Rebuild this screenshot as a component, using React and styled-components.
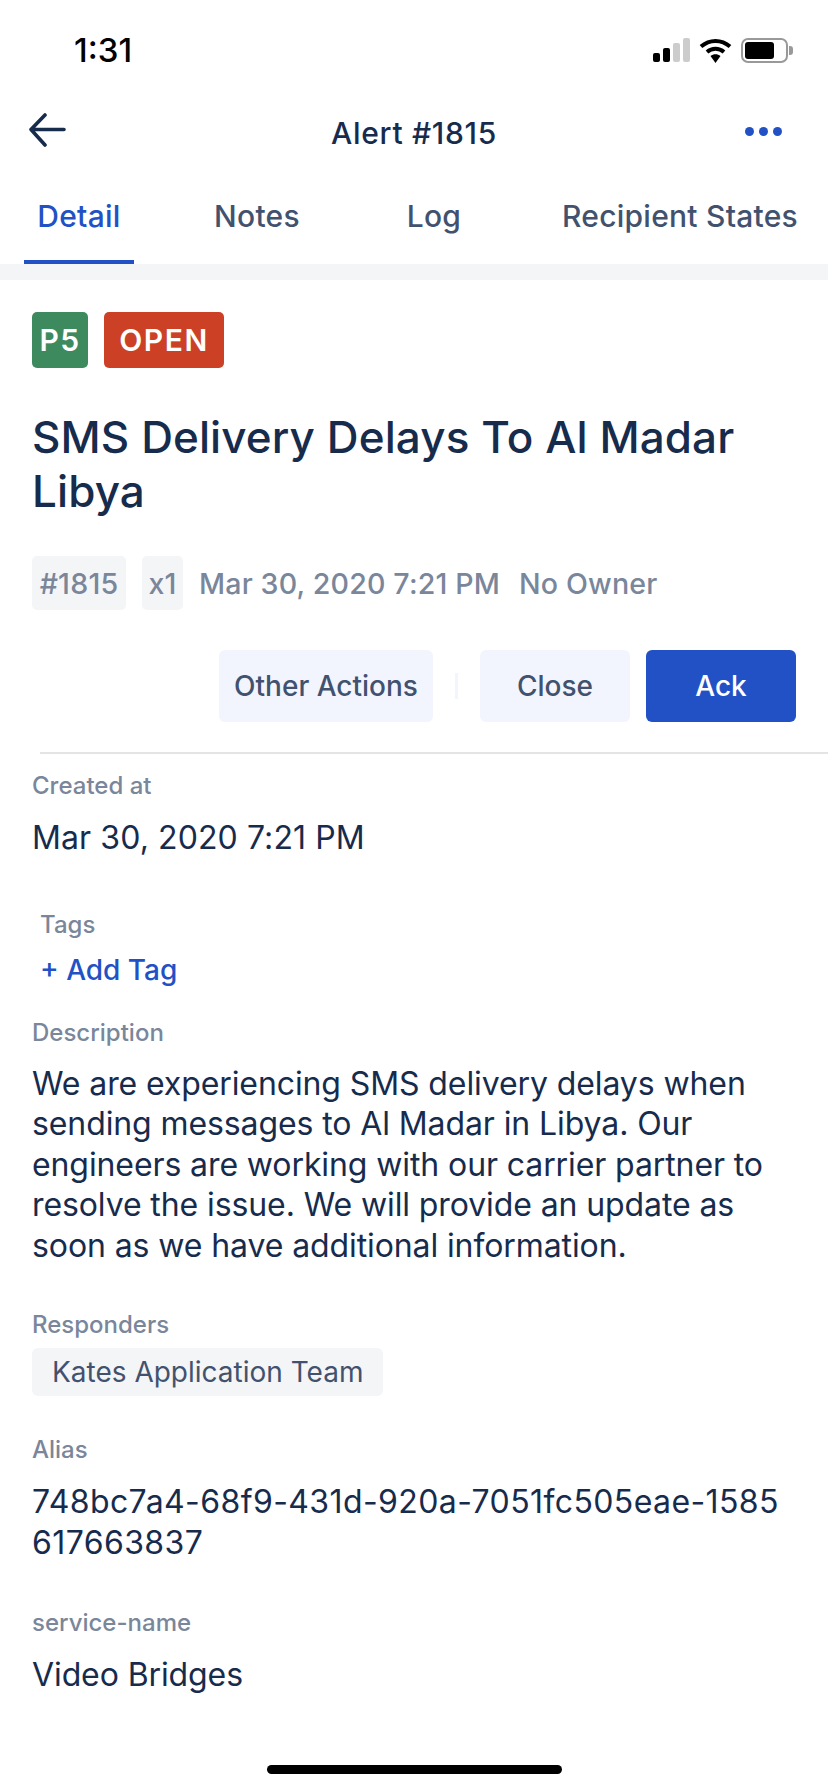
import React from "react";
import styled, { createGlobalStyle } from "styled-components";

const GlobalStyle = createGlobalStyle`
    html, body {
        margin: 0;
        padding: 0;
        background: #fff;
    }
    body {
        font-family: Inter, "Noto Sans", sans-serif;
        color: #172b4d;
    }
`;

const App = () => {
    return (
        <Page>
            <GlobalStyle />
            <StatusBar>
                <Time>1:31</Time>
                <StatusIcons>
                    <svg width="37" height="25" viewBox="0 0 37 25">
                        <rect x="0" y="15" width="7" height="9" rx="2" fill="#000" />
                        <rect x="10" y="10" width="7" height="14" rx="2" fill="#000" />
                        <rect x="20" y="5" width="7" height="19" rx="2" fill="#ccc" />
                        <rect x="30" y="0" width="7" height="24" rx="2" fill="#ccc" />
                    </svg>
                    <svg width="33" height="25" viewBox="0 0 33 25">
                        <path d="M2 8.500C10.500 1 22.500 1 31 8.500" fill="none" stroke="#000" strokeWidth="4" />
                        <path d="M8 14C13 9.800 20 9.800 25 14" fill="none" stroke="#000" strokeWidth="4" />
                        <path d="M11.500 18L16.500 25L21.500 18C18.500 15.600 14.500 15.600 11.500 18Z" fill="#000" />
                    </svg>
                    <Battery>
                        <BatteryLevel />
                    </Battery>
                </StatusIcons>
            </StatusBar>

            <NavBar>
                <BackIcon width="38" height="34" viewBox="0 0 38 34">
                    <path d="M35 16.500H2M16 2L2 16.500L16 32" fill="none" stroke="#172b4d" strokeWidth="3.600" strokeLinecap="round" strokeLinejoin="round" />
                </BackIcon>
                <NavTitle>Alert #1815</NavTitle>
                <MoreDots>
                    <i />
                    <i />
                    <i />
                </MoreDots>
            </NavBar>

            <Tabs>
                <Tab $active $width={110} $gap={0}>Detail</Tab>
                <Tab $width={110} $gap={68}>Notes</Tab>
                <Tab $width={80} $gap={82}>Log</Tab>
                <Tab $width={236} $gap={88}>Recipient States</Tab>
            </Tabs>
            <Band />

            <Content>
                <Badges>
                    <Badge $bg="#3d8a5f" $width={56}>P5</Badge>
                    <Badge $bg="#cc4125" $width={120}>OPEN</Badge>
                </Badges>
                <Title>SMS Delivery Delays To Al Madar Libya</Title>
                <Meta>
                    <MetaChip $width={94}>#1815</MetaChip>
                    <MetaChip $width={41}>x1</MetaChip>
                    <MetaText>Mar 30, 2020 7:21 PM</MetaText>
                    <MetaText>No Owner</MetaText>
                </Meta>
                <Actions>
                    <ActionButton $width={214}>Other Actions</ActionButton>
                    <ActionDivider />
                    <ActionButton $width={150}>Close</ActionButton>
                    <ActionButton $width={150} $primary>Ack</ActionButton>
                </Actions>
            </Content>
            <Rule />

            <Details>
                <Label $top={18}>Created at</Label>
                <Value $top={18} $tracking={0.1}>Mar 30, 2020 7:21 PM</Value>
                <Label $top={52} $inset>Tags</Label>
                <AddTag>+ Add Tag</AddTag>
                <Label $top={32}>Description</Label>
                <Value $top={17}>
                    We are experiencing SMS delivery delays when sending messages to Al Madar in Libya. Our
                    engineers are working with our carrier partner to resolve the issue. We will provide an
                    update as soon as we have additional information.
                </Value>
                <Label $top={45}>Responders</Label>
                <Responder>Kates Application Team</Responder>
                <Label $top={40}>Alias</Label>
                <Value $top={18} $tracking={0.4} $breakAll>748bc7a4-68f9-431d-920a-7051fc505eae-1585617663837</Value>
                <Label $top={46}>service-name</Label>
                <Value $top={18}>Video Bridges</Value>
            </Details>
            <HomeIndicator />
        </Page>
    );
};

const Page = styled.div`
    position: relative;
    width: 828px;
    height: 1792px;
    overflow: hidden;
    background: #fff;
`;

const StatusBar = styled.div`
    display: flex;
    align-items: center;
    justify-content: space-between;
    height: 40px;
    padding: 30px 40px 0 74px;
`;

const Time = styled.div`
    font-size: 33px;
    font-weight: 500;
    color: #000;
`;

const StatusIcons = styled.div`
    display: flex;
    align-items: center;
    gap: 9px;
`;

const Battery = styled.div`
    position: relative;
    box-sizing: border-box;
    width: 47px;
    height: 25px;
    padding: 2px;
    border: 2px solid #999;
    border-radius: 7px;

    &::after {
        content: "";
        position: absolute;
        top: 6px;
        right: -7px;
        width: 4px;
        height: 9px;
        background: #999;
        border-radius: 0 3px 3px 0;
    }
`;

const BatteryLevel = styled.div`
    width: 29px;
    height: 100%;
    background: #000;
    border-radius: 3px;
`;

const NavBar = styled.div`
    display: grid;
    grid-template-columns: 1fr auto 1fr;
    align-items: center;
    height: 62px;
    margin-top: 32px;
    padding: 0 46px 0 29px;
`;

const BackIcon = styled.svg`
    margin-bottom: 7px;
`;

const NavTitle = styled.div`
    margin-left: 17px;
    font-size: 30px;
    font-weight: 500;
    letter-spacing: 0.700px;
    color: #172b4d;
`;

const MoreDots = styled.div`
    display: flex;
    justify-content: flex-end;
    gap: 5px;
    margin-bottom: 4px;

    i {
        width: 9px;
        height: 9px;
        background: #2251c6;
        border-radius: 50%;
    }
`;

const Tabs = styled.div`
    display: flex;
    height: 100px;
    padding-left: 24px;
`;

const Tab = styled.div`
    box-sizing: border-box;
    width: ${(p) => p.$width}px;
    margin-left: ${(p) => p.$gap}px;
    padding-top: 34px;
    text-align: center;
    font-size: 30px;
    font-weight: 500;
    letter-spacing: 0.250px;
    white-space: nowrap;
    color: ${(p) => (p.$active ? "#2251c6" : "#42526e")};
    border-bottom: ${(p) => (p.$active ? "4px solid #2251c6" : "none")};
`;

const Band = styled.div`
    height: 16px;
    background: #f4f5f7;
`;

const Content = styled.div`
    padding: 32px 32px 0;
`;

const Badges = styled.div`
    display: flex;
    gap: 16px;
`;

const Badge = styled.div`
    display: flex;
    align-items: center;
    justify-content: center;
    width: ${(p) => p.$width}px;
    height: 56px;
    background: ${(p) => p.$bg};
    border-radius: 5px;
    color: #fff;
    font-size: 30px;
    font-weight: 600;
    letter-spacing: 1.500px;
`;

const Title = styled.h1`
    margin: 42px 0 0;
    font-size: 44px;
    line-height: 54px;
    font-weight: 500;
    letter-spacing: 0.100px;
    color: #172b4d;
`;

const Meta = styled.div`
    display: flex;
    align-items: center;
    margin-top: 38px;
    height: 54px;
`;

const MetaChip = styled.div`
    display: flex;
    align-items: center;
    justify-content: center;
    width: ${(p) => p.$width}px;
    height: 54px;
    margin-right: 16px;
    background: #f4f5f7;
    border-radius: 5px;
    font-size: 28.600px;
    font-weight: 500;
    letter-spacing: 0.200px;
    color: #7a869a;
`;

const MetaText = styled.div`
    margin-right: 19px;
    font-size: 28.600px;
    font-weight: 500;
    letter-spacing: 0.150px;
    color: #7a869a;
    white-space: nowrap;
`;

const Actions = styled.div`
    display: flex;
    align-items: center;
    justify-content: flex-end;
    gap: 16px;
    margin-top: 40px;
`;

const ActionButton = styled.div`
    display: flex;
    align-items: center;
    justify-content: center;
    width: ${(p) => p.$width}px;
    height: 72px;
    background: ${(p) => (p.$primary ? "#2251c6" : "#f2f5fe")};
    color: ${(p) => (p.$primary ? "#fff" : "#42526e")};
    border-radius: 6px;
    font-size: 28px;
    font-weight: 500;
`;

const ActionDivider = styled.div`
    width: 3px;
    height: 26px;
    margin: 0 6px;
    background: #f2f5fe;
`;

const Rule = styled.div`
    height: 2px;
    margin: 30px 0 0 40px;
    background: #e4e4e4;
`;

const Details = styled.div`
    padding: 0 32px;
`;

const Label = styled.div`
    margin-top: ${(p) => p.$top}px;
    padding-left: ${(p) => (p.$inset ? 8 : 0)}px;
    font-size: 24px;
    line-height: 28px;
    font-weight: 500;
    color: #7a869a;
`;

const Value = styled.div`
    margin-top: ${(p) => p.$top}px;
    font-size: 32px;
    line-height: 40.500px;
    letter-spacing: ${(p) => p.$tracking ?? -0.1}px;
    color: #172b4d;
    word-break: ${(p) => (p.$breakAll ? "break-all" : "normal")};
`;

const AddTag = styled.div`
    margin-top: 14px;
    padding-left: 8px;
    font-size: 28px;
    line-height: 34px;
    font-weight: 500;
    color: #2251c6;
`;

const Responder = styled.div`
    display: inline-block;
    margin-top: 9px;
    padding: 0 20px;
    height: 48px;
    line-height: 48px;
    background: #f4f5f7;
    border-radius: 6px;
    font-size: 28px;
    color: #42526e;
`;

const HomeIndicator = styled.div`
    position: absolute;
    left: 267px;
    bottom: 18px;
    width: 295px;
    height: 9px;
    background: #000;
    border-radius: 5px;
`;

export default App;
